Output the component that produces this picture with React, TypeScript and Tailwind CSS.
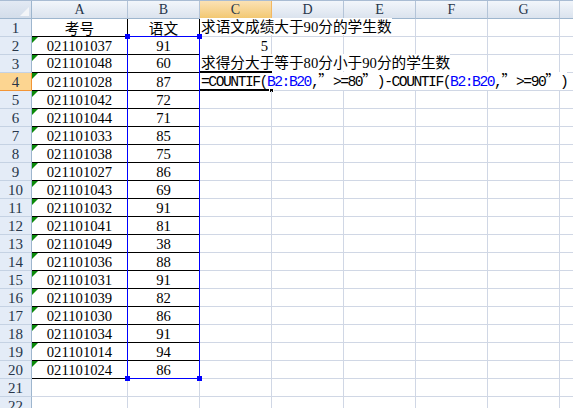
import type { ReactNode } from "react";

const MONO = "font-['Liberation_Mono',monospace] text-[14.67px] tracking-[-1.47px]";
const DIGIT = "font-['Liberation_Serif',serif] text-[14.67px]";
const CJK = "font-['Noto_Sans_CJK_SC',sans-serif] text-[14.67px]";

const ids = [
  "021101037", "021101048", "021101028", "021101042", "021101044", "021101033",
  "021101038", "021101027", "021101043", "021101032", "021101041", "021101049",
  "021101036", "021101031", "021101039", "021101030", "021101034", "021101014",
  "021101024",
];
const scores = [91, 60, 87, 72, 71, 85, 75, 86, 69, 91, 81, 38, 88, 91, 82, 86, 91, 94, 86];

const rowNums = Array.from({ length: 22 }, (_, i) => i + 1);

const Quote = () => (
  <span className="inline-block w-[14.67px] font-['Noto_Sans_CJK_SC',sans-serif] text-[14.67px]">”</span>
);

const Blue = ({ children }: { children: ReactNode }) => (
  <span className={`${MONO} text-[#0000ff]`}>{children}</span>
);

const ColHeader = ({ label, w, active }: { label: string; w: string; active?: boolean }) => (
  <div
    className={`${w} flex h-full shrink-0 items-center justify-center border-r border-b font-['Liberation_Serif',serif] text-[14px] text-[#27364a] ${
      active
        ? "border-r-[#f2b862] border-b-[#f29536] bg-linear-to-b from-[#fbe2b4] to-[#f3c872]"
        : "border-r-[#b4c4d8] border-b-[#9eb6ce] bg-linear-to-b from-[#f2f6fb] to-[#dbe3ee]"
    }`}
  >
    {label}
  </div>
);

const RowHeader = ({ n }: { n: number }) => (
  <div
    className={`flex w-[32px] shrink-0 items-end justify-center border-r border-b font-['Liberation_Serif',serif] text-[15px] leading-[16px] text-[#27364a] ${
      n === 4
        ? "border-r-[#f29536] border-b-[#f29536] bg-[#fcd591]"
        : "border-r-[#9eb6ce] border-b-[#c5d2e3] bg-[#e4ecf7]"
    }`}
  >
    {n}
  </div>
);

const OverflowText = ({ children }: { children: ReactNode }) => (
  <span className="whitespace-nowrap bg-white pl-[1px] leading-[15px]">{children}</span>
);

export default function App() {
  return (
    <div className="relative h-[408px] w-[573px] overflow-hidden bg-white text-black">
      {/* column headers */}
      <div className="flex h-[19px] border-t border-t-[#a9bcd3]">
        <div className="relative flex h-full w-[32px] shrink-0 border-r border-b border-r-[#9eb6ce] border-b-[#9eb6ce] bg-linear-to-b from-[#e3eaf4] to-[#d3ddea]">
          <div className="absolute right-[2px] bottom-[2px] h-0 w-0 border-b-[9px] border-l-[9px] border-b-[#f3f5f8] border-l-transparent" />
        </div>
        <ColHeader label="A" w="w-[96px]" />
        <ColHeader label="B" w="w-[72px]" />
        <ColHeader label="C" w="w-[72px]" active />
        <ColHeader label="D" w="w-[72px]" />
        <ColHeader label="E" w="w-[72px]" />
        <ColHeader label="F" w="w-[72px]" />
        <ColHeader label="G" w="w-[72px]" />
        <ColHeader label="H" w="w-[72px]" />
      </div>

      {rowNums.map((n) => {
        const inTable = n <= 20;
        const tableBorder = inTable ? "border-black" : "border-[#d0d7e5]";
        const cjkRow = n === 1 || n === 3;
        return (
          <div key={n} className="flex h-[18px]">
            <RowHeader n={n} />

            {/* A */}
            <div
              className={`relative flex w-[96px] shrink-0 items-end justify-center border-r border-b ${tableBorder} leading-[15px] ${
                cjkRow ? "pb-[1px]" : ""
              }`}
            >
              {n === 1 && <span className={CJK}>考号</span>}
              {n >= 2 && inTable && (
                <>
                  <div className="absolute top-0 left-0 h-0 w-0 border-t-[6px] border-r-[6px] border-t-[#0a8a0a] border-r-transparent" />
                  <span className={DIGIT}>{ids[n - 2]}</span>
                </>
              )}
            </div>

            {/* B */}
            <div
              className={`flex w-[72px] shrink-0 items-end justify-center border-r border-b ${tableBorder} leading-[15px] ${
                cjkRow ? "pb-[1px]" : ""
              }`}
            >
              {n === 1 && <span className={CJK}>语文</span>}
              {n >= 2 && inTable && <span className={DIGIT}>{scores[n - 2]}</span>}
            </div>

            {/* C */}
            <div
              className={`relative z-10 flex w-[72px] shrink-0 items-end border-r border-b border-[#d0d7e5] ${
                n === 2 ? "justify-end pr-[3px]" : ""
              } ${cjkRow ? "pb-[1px]" : ""}`}
            >
              {n === 1 && (
                <OverflowText>
                  <span className={CJK}>求语文成绩大于</span>
                  <span className={DIGIT}>90</span>
                  <span className={CJK}>分的学生数</span>
                </OverflowText>
              )}
              {n === 2 && <span className={`${DIGIT} leading-[15px]`}>5</span>}
              {n === 3 && (
                <OverflowText>
                  <span className={CJK}>求得分大于等于</span>
                  <span className={DIGIT}>80</span>
                  <span className={CJK}>分小于</span>
                  <span className={DIGIT}>90</span>
                  <span className={CJK}>分的学生数</span>
                </OverflowText>
              )}
              {n === 4 && (
                <>
                  <OverflowText>
                    <span className={MONO}>=COUNTIF(</span>
                    <Blue>B2:B20</Blue>
                    <span className={MONO}>,</span>
                    <Quote />
                    <span className={MONO}>&gt;=80</span>
                    <Quote />
                    <span className={MONO}>)-COUNTIF(</span>
                    <Blue>B2:B20</Blue>
                    <span className={MONO}>,</span>
                    <Quote />
                    <span className={MONO}>&gt;=90</span>
                    <Quote />
                    <span className={MONO}>)</span>
                  </OverflowText>
                  {/* active cell frame */}
                  <div className="absolute -top-[2px] -left-[1px] h-[2px] w-[73px] bg-black" />
                  <div className="absolute -bottom-[1px] -left-[1px] h-[2px] w-[73px] bg-black" />
                  <div className="absolute -top-[1px] -left-[1px] h-[19px] w-[1px] bg-[#f3e24a]" />
                  <div className="absolute -right-[3px] -bottom-[3px] h-[5px] w-[5px] border border-white bg-black" />
                </>
              )}
            </div>

            {["D", "E", "F", "G", "H"].map((c) => (
              <div key={c} className="w-[72px] shrink-0 border-r border-b border-[#d0d7e5]" />
            ))}
          </div>
        );
      })}

      {/* reference range B2:B20 */}
      <div className="pointer-events-none absolute top-[36px] left-[127px] z-20 h-[343px] w-[73px] border border-[#0000ff]">
        <div className="absolute -top-[3px] -left-[3px] h-[5px] w-[5px] bg-[#0000ff]" />
        <div className="absolute -top-[3px] -right-[3px] h-[5px] w-[5px] bg-[#0000ff]" />
        <div className="absolute -bottom-[3px] -left-[3px] h-[5px] w-[5px] bg-[#0000ff]" />
        <div className="absolute -right-[3px] -bottom-[3px] h-[5px] w-[5px] bg-[#0000ff]" />
      </div>
    </div>
  );
}
